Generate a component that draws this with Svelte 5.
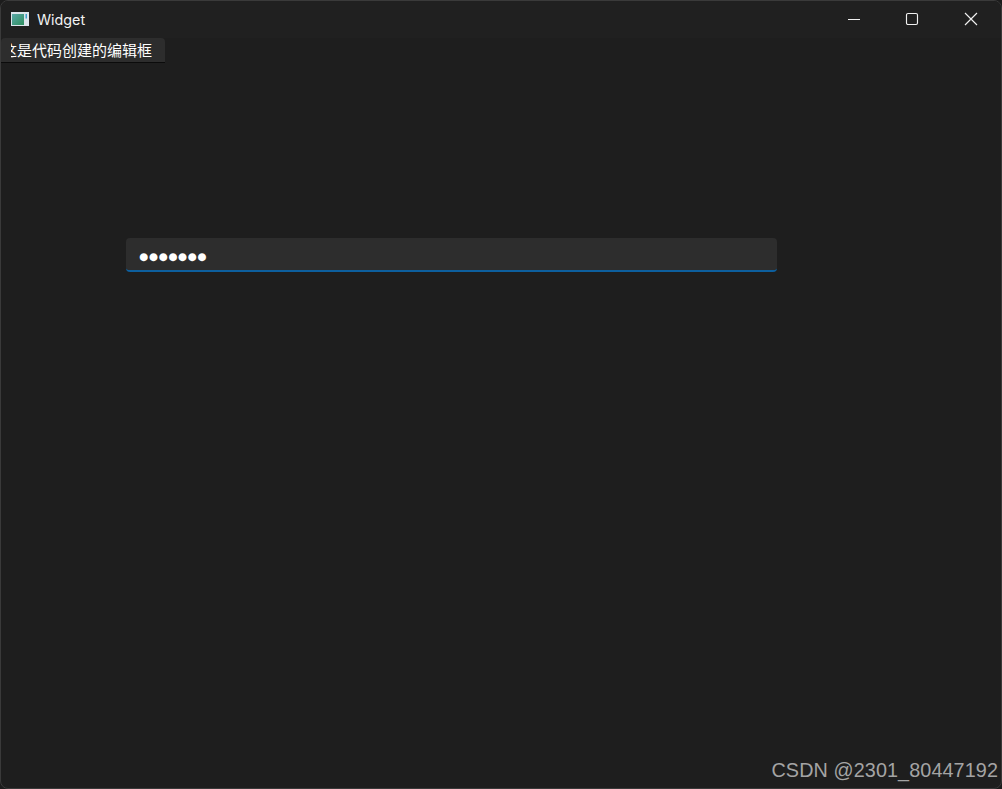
<script>
	const title = 'Widget';
	const dots = '●●●●●●●';
</script>

<div class="window">
	<header class="titlebar">
		<svg class="app-icon" width="18" height="14" viewBox="0 0 18 14">
			<defs>
				<linearGradient id="pane" x1="0" y1="0" x2="1" y2="1">
					<stop offset="0" stop-color="#5aa8a8" />
					<stop offset="1" stop-color="#2f8f5f" />
				</linearGradient>
			</defs>
			<rect x="0" y="0" width="18" height="14" fill="#dde5ec" />
			<rect x="1" y="2" width="12" height="11" fill="url(#pane)" />
			<rect x="14.5" y="2" width="1.5" height="4.5" fill="#3e9fd0" />
		</svg>
		<span class="title">{title}</span>
		<div class="controls">
			<button class="ctl" aria-label="Minimize">
				<svg width="14" height="14" viewBox="0 0 14 14"><path d="M1 7.5h12" /></svg>
			</button>
			<button class="ctl" aria-label="Maximize">
				<svg width="14" height="14" viewBox="0 0 14 14"><rect x="1.5" y="1.5" width="11" height="11" rx="1.5" /></svg>
			</button>
			<button class="ctl" aria-label="Close">
				<svg width="14" height="14" viewBox="0 0 14 14"><path d="M1 1l12 12M13 1L1 13" /></svg>
			</button>
		</div>
	</header>

	<main class="client">
		<div class="edit first"><span class="scrolled">这是代码创建的编辑框</span></div>
		<div class="edit password"><span class="dots">{dots}</span></div>
	</main>

	<div class="watermark">CSDN @2301_80447192</div>
</div>

<style>
	:global(body) {
		margin: 0;
		background: #1c1c1c;
	}
	.window {
		position: relative;
		box-sizing: border-box;
		width: 1002px;
		height: 789px;
		display: flex;
		flex-direction: column;
		background: #1e1e1e;
		border: 1px solid #3a3a3a;
		border-radius: 8px;
		overflow: hidden;
		font-family: 'Liberation Sans', 'Noto Sans CJK SC', sans-serif;
		color: #fff;
	}
	.titlebar {
		height: 37px;
		flex: none;
		display: flex;
		align-items: center;
		background: #202020;
		padding-left: 10px;
	}
	.app-icon {
		margin-top: -1px;
	}
	.title {
		margin-left: 8px;
		font-family: 'Inter', 'Liberation Sans', sans-serif;
		font-size: 14.3px;
		color: #f2f2f2;
		margin-top: -1px;
	}
	.controls {
		margin-left: auto;
		display: flex;
		margin-right: 1px;
	}
	.ctl {
		width: 58.5px;
		height: 37px;
		padding: 0;
		border: 0;
		background: none;
		display: flex;
		align-items: center;
		justify-content: center;
	}
	.ctl svg {
		fill: none;
		stroke: #f0f0f0;
		stroke-width: 1.15;
		margin-top: -1px;
	}
	.client {
		flex: 1;
		display: flex;
		flex-direction: column;
		align-items: flex-start;
	}
	.edit {
		box-sizing: border-box;
		display: flex;
		align-items: center;
		overflow: hidden;
		background: #2d2d2d;
		border-radius: 4px;
		white-space: nowrap;
	}
	.first {
		width: 164px;
		height: 25px;
		font-size: 15px;
		border-bottom: 1px solid #0b0b0b;
		padding-left: 10px;
		border-radius: 4px 4px 0 0;
	}
	.scrolled {
		margin-left: -9px;
		margin-top: -1px;
		clip-path: inset(0 0 0 9px);
	}
	.password {
		width: 651px;
		height: 34px;
		margin: 175px 0 0 125px;
		padding-left: 13px;
		border-bottom: 2px solid #0d5f9e;
	}
	.dots {
		font-family: 'DejaVu Sans', sans-serif;
		font-size: 10.4px;
		letter-spacing: 0.65px;
		padding-top: 3px;
	}
	.watermark {
		position: absolute;
		right: 3px;
		bottom: 6px;
		font-size: 19.8px;
		color: #a4a4a4;
		letter-spacing: 0.1px;
	}
</style>
